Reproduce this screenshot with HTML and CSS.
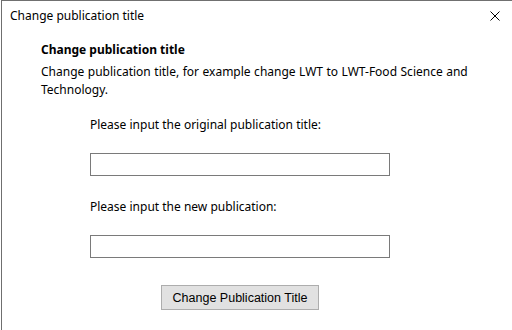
FILE: index.html
```html
<!DOCTYPE html>
<html lang="en">
<head>
    <meta charset="UTF-8">
    <title>Change publication title</title>
    <link rel="stylesheet" href="styles.css">
</head>
<body>
    <div class="window">
        <div class="title-bar">
            <span class="title-text">Change publication title</span>
            <svg class="close-icon" width="10" height="10" viewBox="0 0 10 10">
                <path d="M0.5 0.5 L9.5 9.5 M9.5 0.5 L0.5 9.5" stroke="#000" stroke-width="1" fill="none"/>
            </svg>
        </div>

        <div class="content">
            <div class="heading">Change publication title</div>
            <div class="description">Change publication title, for example change LWT to LWT-Food Science and Technology.</div>

            <div class="form">
                <label class="field-label" for="old-title">Please input the original publication title:</label>
                <input class="field-input" type="text" id="old-title">

                <label class="field-label" for="new-title">Please input the new publication:</label>
                <input class="field-input" type="text" id="new-title">
            </div>

            <div class="button-row">
                <button type="button" class="action-button">Change Publication Title</button>
            </div>
        </div>
    </div>
</body>
</html>
```
FILE: styles.css
```css
html, body {
    margin: 0;
    padding: 0;
    background: #ffffff;
}
body {
    width: 512px;
    height: 330px;
    overflow: hidden;
}
.window {
    margin-left: 1px;
    height: 330px;
    border-top: 1px solid #707070;
    border-left: 1px solid #6f6f6f;
    background: #ffffff;
    font-family: "Noto Sans", sans-serif;
    color: #000000;
}
.title-bar {
    height: 29px;
    display: flex;
    align-items: center;
    justify-content: space-between;
    padding: 0 12px 0 8px;
}
.title-text {
    font-size: 12px;
}
.close-icon {
    display: block;
}
.content {
    padding: 11px 0 0 39px;
    font-size: 12px;
}
.heading {
    font-weight: bold;
    line-height: 18px;
}
.description {
    margin-top: 4px;
    width: 450px;
    line-height: 18px;
    word-spacing: 0.4px;
}
.form {
    display: flex;
    flex-direction: column;
    padding-left: 49px;
    margin-top: 17px;
}
.field-label {
    line-height: 18px;
}
.field-input {
    box-sizing: border-box;
    width: 300px;
    height: 23px;
    margin: 19px 0 22px 0;
    border: 1px solid #7a7a7a;
    padding: 0 4px;
    font-size: 12px;
    outline: none;
}
.button-row {
    padding-left: 120px;
    margin-top: 5px;
}
.action-button {
    box-sizing: border-box;
    width: 158px;
    height: 25px;
    background: #e1e1e1;
    border: 1px solid #adadad;
    font-family: "Liberation Sans", sans-serif;
    font-size: 12.5px;
    color: #000000;
    padding: 0;
}
```
